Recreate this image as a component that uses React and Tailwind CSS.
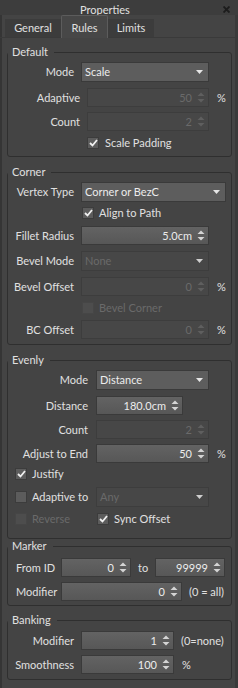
import React from "react";

const Arrows = ({ on }) => (
  <svg width="8" height="13" viewBox="0 0 8 13">
    <path d="M0.5 5 L4 1.5 L7.5 5 Z" fill={on ? "#d4d4d4" : "#5f5f5f"} />
    <path d="M0.5 8 L4 11.5 L7.5 8 Z" fill={on ? "#d4d4d4" : "#5f5f5f"} />
  </svg>
);

const Spinner = ({ w, value, on }) => (
  <div
    className={
      "flex h-[19px] items-center border " +
      w +
      (on
        ? " border-[#3a3a3a] bg-gradient-to-b from-[#636363] to-[#575757] text-[#ececec]"
        : " border-[#3d3d3d] bg-[#474747] text-[#6a6a6a]")
    }
  >
    <span className="flex-1 pr-[2px] text-right leading-[17px]">{value}</span>
    <div className="flex w-[14px] justify-center">
      <Arrows on={on} />
    </div>
  </div>
);

const Drop = ({ w, value, on = true }) => (
  <div
    className={
      "flex h-[20px] items-center border pl-[3px] " +
      w +
      (on
        ? " border-[#3a3a3a] bg-[#5d5d5d] text-[#ececec]"
        : " border-[#3d3d3d] bg-[#474747] text-[#6a6a6a]")
    }
  >
    <span className="flex-1 leading-[18px]">{value}</span>
    <svg width="7" height="4" viewBox="0 0 7 4" className="mr-[5px]">
      <path d="M0 0 L7 0 L3.5 4 Z" fill={on ? "#e6e6e6" : "#cfcfcf"} />
    </svg>
  </div>
);

const Check = ({ checked, on = true }) => (
  <div
    className={
      "flex h-[12px] w-[12px] shrink-0 items-center justify-center border " +
      (on ? "border-[#3c3c3c] bg-[#5c5c5c]" : "border-[#464646] bg-[#4d4d4d]")
    }
  >
    {checked && (
      <svg width="9" height="8" viewBox="0 0 9 8">
        <path d="M1 4 L3.5 6.5 L8 1" stroke="#f0f0f0" strokeWidth="1.8" fill="none" />
      </svg>
    )}
  </div>
);

const Group = ({ title, className, children }) => (
  <fieldset
    className={
      "ml-[7px] w-[225px] rounded-[3px] border border-[#2f2f2f] " + className
    }
  >
    <legend className="h-[14px] pl-[4px] pr-[6px] leading-[14px]">{title}</legend>
    {children}
  </fieldset>
);

export default function App() {
  return (
    <div className="h-[688px] w-[238px] overflow-hidden whitespace-nowrap bg-[#444444] text-[11px] text-[#e0e0e0] shadow-[inset_2px_0_0_#353535,inset_-3px_0_0_#3a3a3a] [font-family:Lato,'Noto_Sans',sans-serif]">
      {/* title */}
      <div className="flex h-[15px] bg-[#3d3d3d] pt-[4px]">
        <span className="ml-[80px] leading-[11px]">Properties</span>
        <div className="flex-1" />
        <svg width="7" height="7" viewBox="0 0 7 7" className="mr-[8px] mt-[2px]">
          <path d="M0.5 0.5 L6.5 6.5 M6.5 0.5 L0.5 6.5" stroke="#1c1c1c" strokeWidth="1.8" />
        </svg>
      </div>
      {/* tabs */}
      <div className="flex h-[23px]">
        <div className="w-[5px] border-b border-[#3a3a3a]" />
        <div className="mt-[4px] flex h-[19px] w-[56px] items-center justify-center border-b border-[#3a3a3a] bg-[#3c3c3c] pt-[1px]">
          General
        </div>
        <div className="flex h-[23px] w-[47px] items-center justify-center rounded-t-[2px] border-x border-t border-[#5c5c5c] bg-[#474747] pt-[2px]">
          Rules
        </div>
        <div className="mt-[4px] flex h-[19px] w-[46px] items-center justify-center border-b border-[#3a3a3a] bg-[#3c3c3c] pt-[1px]">
          Limits
        </div>
        <div className="flex-1 border-b border-[#3a3a3a]" />
      </div>

      <div className="pt-[7px]">
        {/* Default */}
        <Group title="Default" className="pb-[7px] pt-[3px]">
          <div className="flex h-[26px]">
            <span className="w-[66px] text-right leading-[20px]">Mode</span>
            <div className="ml-[7px]">
              <Drop w="w-[128px]" value="Scale" />
            </div>
          </div>
          <div className="flex h-[24px]">
            <span className="w-[72px] text-right leading-[19px]">Adaptive</span>
            <div className="ml-[7px]">
              <Spinner w="w-[122px]" value="50" />
            </div>
            <span className="ml-[8px] leading-[19px]">%</span>
          </div>
          <div className="flex h-[25px]">
            <span className="w-[72px] text-right leading-[19px]">Count</span>
            <div className="ml-[7px]">
              <Spinner w="w-[122px]" value="2" />
            </div>
          </div>
          <div className="flex h-[12px] items-center">
            <div className="ml-[79px]">
              <Check checked />
            </div>
            <span className="ml-[6px]">Scale Padding</span>
          </div>
        </Group>

        {/* Corner */}
        <Group title="Corner" className="mt-[8px] pb-[5px] pt-[3px]">
          <div className="flex h-[25px]">
            <span className="w-[66px] text-right leading-[20px]">Vertex Type</span>
            <div className="ml-[7px]">
              <Drop w="w-[145px]" value="Corner or BezC" />
            </div>
          </div>
          <div className="flex h-[19px] items-start">
            <div className="ml-[74px]">
              <Check checked />
            </div>
            <span className="ml-[5px] leading-[12px]">Align to Path</span>
          </div>
          <div className="flex h-[25px]">
            <span className="w-[66px] text-right leading-[19px]">Fillet Radius</span>
            <div className="ml-[7px]">
              <Spinner w="w-[128px]" value="5.0cm" on />
            </div>
          </div>
          <div className="flex h-[26px]">
            <span className="w-[66px] text-right leading-[20px]">Bevel Mode</span>
            <div className="ml-[7px]">
              <Drop w="w-[128px]" value="None" on={false} />
            </div>
          </div>
          <div className="flex h-[25px]">
            <span className="w-[66px] text-right leading-[19px]">Bevel Offset</span>
            <div className="ml-[7px]">
              <Spinner w="w-[128px]" value="0" />
            </div>
            <span className="ml-[8px] leading-[19px]">%</span>
          </div>
          <div className="flex h-[18px] items-start">
            <div className="ml-[74px]">
              <Check on={false} />
            </div>
            <span className="ml-[5px] leading-[12px] text-[#6a6a6a]">Bevel Corner</span>
          </div>
          <div className="flex h-[19px]">
            <span className="w-[66px] text-right leading-[19px]">BC Offset</span>
            <div className="ml-[7px]">
              <Spinner w="w-[128px]" value="0" />
            </div>
            <span className="ml-[8px] leading-[19px]">%</span>
          </div>
        </Group>

        {/* Evenly */}
        <Group title="Evenly" className="mt-[8px] pb-[13px] pt-[3px]">
          <div className="flex h-[26px]">
            <span className="w-[80px] text-right leading-[20px]">Mode</span>
            <div className="ml-[8px]">
              <Drop w="w-[113px]" value="Distance" />
            </div>
          </div>
          <div className="flex h-[24px]">
            <span className="w-[80px] text-right leading-[19px]">Distance</span>
            <div className="ml-[8px]">
              <Spinner w="w-[87px]" value="180.0cm" on />
            </div>
          </div>
          <div className="flex h-[24px]">
            <span className="w-[80px] text-right leading-[19px]">Count</span>
            <div className="ml-[8px]">
              <Spinner w="w-[113px]" value="2" />
            </div>
          </div>
          <div className="flex h-[24px]">
            <span className="w-[80px] text-right leading-[19px]">Adjust to End</span>
            <div className="ml-[8px]">
              <Spinner w="w-[113px]" value="50" on />
            </div>
            <span className="ml-[8px] leading-[19px]">%</span>
          </div>
          <div className="flex h-[19px] items-start">
            <div className="ml-[7px]">
              <Check checked />
            </div>
            <span className="ml-[5px] leading-[12px]">Justify</span>
          </div>
          <div className="flex h-[26px]">
            <div className="flex h-[20px] w-[80px] items-center pl-[7px]">
              <Check />
              <span className="ml-[5px]">Adaptive to</span>
            </div>
            <div className="ml-[8px]">
              <Drop w="w-[113px]" value="Any" on={false} />
            </div>
          </div>
          <div className="flex h-[12px] items-center">
            <div className="flex w-[80px] items-center pl-[7px]">
              <Check on={false} />
              <span className="ml-[5px] text-[#6a6a6a]">Reverse</span>
            </div>
            <div className="ml-[9px]">
              <Check checked />
            </div>
            <span className="ml-[5px]">Sync Offset</span>
          </div>
        </Group>

        {/* Marker */}
        <Group title="Marker" className="pb-[5px] pt-[5px]">
          <div className="flex h-[24px] pl-[8px]">
            <span className="w-[45px] leading-[19px]">From ID</span>
            <Spinner w="w-[70px]" value="0" on />
            <span className="w-[24px] pl-[7px] leading-[19px]">to</span>
            <Spinner w="w-[70px]" value="99999" on />
          </div>
          <div className="flex h-[18px] pl-[8px]">
            <span className="w-[45px] leading-[19px]">Modifier</span>
            <Spinner w="w-[121px]" value="0" on />
            <span className="ml-[7px] leading-[19px]">(0 = all)</span>
          </div>
        </Group>

        {/* Banking */}
        <Group title="Banking" className="mt-[7px] pb-[6px] pt-[4px]">
          <div className="flex h-[24px]">
            <span className="w-[66px] text-right leading-[19px]">Modifier</span>
            <div className="ml-[7px]">
              <Spinner w="w-[93px]" value="1" on />
            </div>
            <span className="ml-[7px] leading-[19px]">(0=none)</span>
          </div>
          <div className="flex h-[18px]">
            <span className="w-[66px] text-right leading-[19px]">Smoothness</span>
            <div className="ml-[7px]">
              <Spinner w="w-[93px]" value="100" on />
            </div>
            <span className="ml-[8px] leading-[19px]">%</span>
          </div>
        </Group>
      </div>
    </div>
  );
}
